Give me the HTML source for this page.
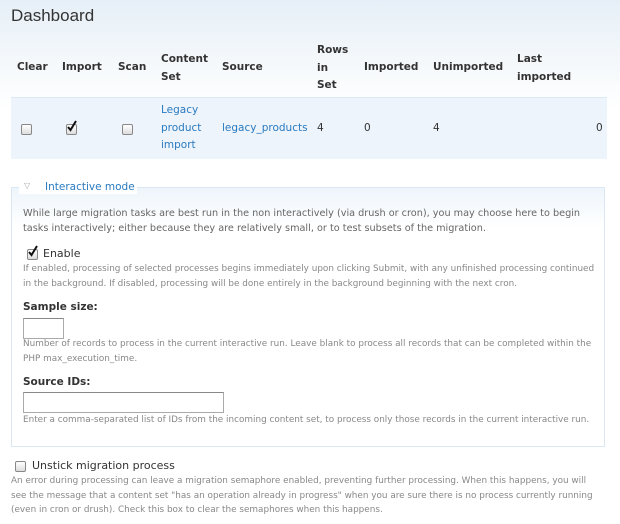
<!DOCTYPE html>
<html><head><style>
body{margin:0;width:620px;height:524px;position:relative;overflow:hidden;font-family:"DejaVu Sans","Liberation Sans",sans-serif;background:linear-gradient(#e6eff7 0px,#f4f8fb 60px,#fff 110px);color:#333}
.a{position:absolute;white-space:nowrap}
.h{font-weight:bold;font-size:10.5px;line-height:17.5px;color:#333}
.l{color:#2a7ac0;font-size:10.5px;line-height:17.5px}
.t{font-size:10.5px;line-height:17.5px;color:#333}
.cb{position:absolute;width:9px;height:9px;border:1px solid #888;border-radius:2px;background:linear-gradient(#fff,#ddd)}
.ck{position:absolute;width:12px;height:12px}
.p{font-size:9.7px;color:#666;line-height:14.5px}
.d{font-size:8.85px;color:#888;line-height:14.5px}
.in{position:absolute;border:1px solid #aaa;border-top-color:#888;background:#fff}
</style></head><body>
<div class="a" style="left:11px;top:6px;font-family:'Liberation Sans',sans-serif;font-size:17px;color:#333">Dashboard</div>

<div class="a h" style="left:17px;top:59px">Clear</div>
<div class="a h" style="left:62px;top:59px">Import</div>
<div class="a h" style="left:118px;top:59px">Scan</div>
<div class="a h" style="left:161px;top:51px">Content<br>Set</div>
<div class="a h" style="left:222px;top:59px">Source</div>
<div class="a h" style="left:317px;top:42px">Rows<br>in<br>Set</div>
<div class="a h" style="left:364px;top:59px">Imported</div>
<div class="a h" style="left:433px;top:59px">Unimported</div>
<div class="a h" style="left:517px;top:51px">Last<br>imported</div>

<div class="a" style="left:11px;top:97px;width:596px;height:61px;background:#edf4fb;border-top:1px solid #dde8f2"></div>
<div class="cb" style="left:21px;top:124px"></div>
<div class="cb" style="left:66px;top:124px"></div><svg class="ck" style="left:66px;top:120px" viewBox="0 0 12 12"><path d="M2 7 L4.5 10 L10 1" stroke="#111" stroke-width="2" fill="none"/></svg>
<div class="cb" style="left:122px;top:124px"></div>
<div class="a l" style="left:161px;top:102px">Legacy<br>product<br>import</div>
<div class="a l" style="left:222px;top:120px">legacy_products</div>
<div class="a t" style="left:317px;top:120px">4</div>
<div class="a t" style="left:364px;top:120px">0</div>
<div class="a t" style="left:433px;top:120px">4</div>
<div class="a t" style="left:596px;top:120px">0</div>

<div class="a" style="left:11px;top:187px;width:592px;height:258px;border:1px solid #dbe7f2;background:linear-gradient(#eef5fb,#fff 40px)"></div>
<div class="a" style="left:19px;top:180px;width:118px;height:14px;background:#fff"></div>
<div class="a" style="left:24px;top:181px;font-size:8px;color:#aaa">▽</div>
<div class="a l" style="left:45px;top:179px">Interactive mode</div>

<div class="a p" style="left:23px;top:207px">While large migration tasks are best run in the non interactively (via drush or cron), you may choose here to begin<br>tasks interactively; either because they are relatively small, or to test subsets of the migration.</div>
<div class="cb" style="left:27px;top:249px"></div><svg class="ck" style="left:27px;top:245px" viewBox="0 0 12 12"><path d="M2 7 L4.5 10 L10 1" stroke="#111" stroke-width="2" fill="none"/></svg>
<div class="a" style="left:43px;top:247px;font-size:11px;color:#333">Enable</div>
<div class="a d" style="left:23px;top:262px">If enabled, processing of selected processes begins immediately upon clicking Submit, with any unfinished processing continued<br>in the background. If disabled, processing will be done entirely in the background beginning with the next cron.</div>
<div class="a" style="left:23px;top:301px;font-size:10.5px;font-weight:bold;color:#333">Sample size:</div>
<div class="in" style="left:23px;top:318px;width:39px;height:19px"></div>
<div class="a d" style="left:23px;top:337px">Number of records to process in the current interactive run. Leave blank to process all records that can be completed within the<br>PHP max_execution_time.</div>
<div class="a" style="left:23px;top:376px;font-size:10.5px;font-weight:bold;color:#333">Source IDs:</div>
<div class="in" style="left:23px;top:392px;width:199px;height:19px"></div>
<div class="a d" style="left:23px;top:413px">Enter a comma-separated list of IDs from the incoming content set, to process only those records in the current interactive run.</div>

<div class="cb" style="left:15px;top:461px"></div>
<div class="a" style="left:32px;top:459px;font-size:11px;color:#333">Unstick migration process</div>
<div class="a d" style="left:11px;top:474px">An error during processing can leave a migration semaphore enabled, preventing further processing. When this happens, you will<br>see the message that a content set "has an operation already in progress" when you are sure there is no process currently running<br>(even in cron or drush). Check this box to clear the semaphores when this happens.</div>
</body></html>
